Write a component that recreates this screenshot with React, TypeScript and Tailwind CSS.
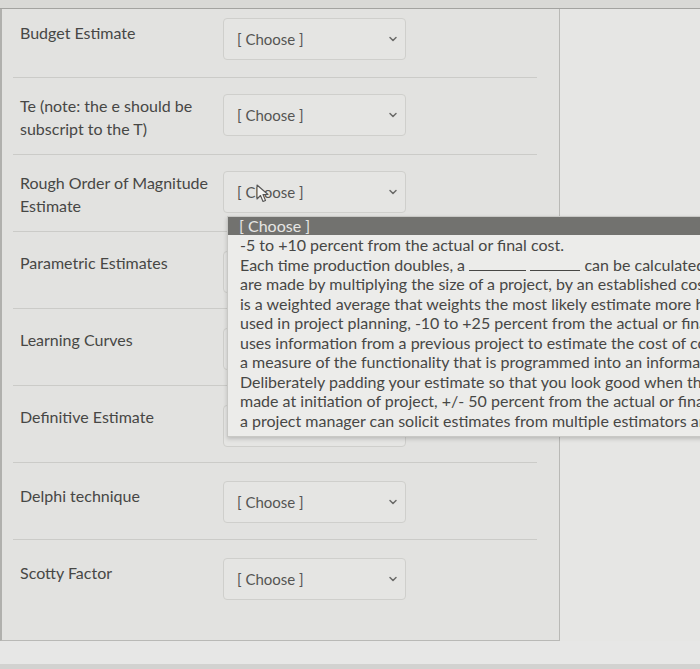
import { ChevronDown } from 'lucide-react';

const rows = [
  { label: ['Budget Estimate'], h: 'h-[69px]', pt: 'pt-[9px]', lt: 'mt-[3px]' },
  { label: ['Te (note: the e should be', 'subscript to the T)'], h: 'h-[77px]', pt: 'pt-[16px]', lt: '' },
  { label: ['Rough Order of Magnitude', 'Estimate'], h: 'h-[77px]', pt: 'pt-[16px]', lt: '', cursor: true },
  { label: ['Parametric Estimates'], h: 'h-[77px]', pt: 'pt-[19px]', lt: '' },
  { label: ['Learning Curves'], h: 'h-[77px]', pt: 'pt-[19px]', lt: '' },
  { label: ['Definitive Estimate'], h: 'h-[77px]', pt: 'pt-[19px]', lt: '' },
  { label: ['Delphi technique'], h: 'h-[77px]', pt: 'pt-[18px]', lt: 'mt-[3px]' },
  { label: ['Scotty Factor'], h: 'flex-1', pt: 'pt-[18px]', lt: 'mt-[3px]', last: true },
];

const options = [
  '-5 to +10 percent from the actual or final cost.',
  'blank',
  'are made by multiplying the size of a project, by an established cost per unit',
  'is a weighted average that weights the most likely estimate more heavily',
  'used in project planning, -10 to +25 percent from the actual or final cost.',
  'uses information from a previous project to estimate the cost of comparable project',
  'a measure of the functionality that is programmed into an information system',
  'Deliberately padding your estimate so that you look good when the project ends',
  'made at initiation of project, +/- 50 percent from the actual or final cost.',
  'a project manager can solicit estimates from multiple estimators and combine',
];

const Select = ({ cursor }: { cursor?: boolean }) => (
  <div className="relative w-[183px] h-[42px] rounded-[4px] border border-[#cfcfcc] bg-[#e5e5e3] flex items-center justify-between pl-[13px] pr-[6px]">
    <span className="text-[15px] text-[#555553]">[ Choose ]</span>
    <ChevronDown size={12} strokeWidth={3} className="text-[#6a6a68]" />
    {cursor && (
      <svg className="absolute left-[32px] top-[12px]" width="14" height="20" viewBox="0 0 14 20">
        <path d="M1 1 L1 15 L4.5 11.5 L7 17.5 L9.5 16.5 L7 10.5 L12 10.5 Z" fill="#f4f4f2" stroke="#555" strokeWidth="1.1" strokeLinejoin="round" />
      </svg>
    )}
  </div>
);

export default function App() {
  return (
    <div
      className="relative w-[700px] h-[669px] overflow-hidden bg-[#e4e4e2] flex flex-col"
      style={{ fontFamily: 'Lato, "Open Sans", sans-serif' }}
    >
      {/* top strip */}
      <div className="h-[9px] shrink-0 bg-[#d9d9d6] border-b border-[#a3a3a0]" />

      <div className="flex">
        {/* question panel */}
        <div className="w-[560px] h-[632px] bg-[#e2e2e0] border-l-2 border-l-[#b0b0ad] border-r border-b border-[#b9b9b6] flex flex-col">
          <div className="ml-[11px] w-[524px] flex flex-col flex-1">
            {rows.map((r, i) => (
              <div
                key={i}
                className={`${r.h} ${r.pt} ${r.last ? '' : 'border-b border-[#cbcbc8]'} flex items-start`}
              >
                <div className={`w-[210px] pl-[7px] text-[16px] leading-[23px] text-[#474745] ${r.lt}`}>
                  {r.label.map((l) => (
                    <div key={l}>{l}</div>
                  ))}
                </div>
                <Select cursor={r.cursor} />
              </div>
            ))}
          </div>
        </div>
        {/* right empty area */}
        <div className="flex-1 h-[632px] bg-[#e6e6e4]" />
      </div>
      <div className="flex-1 bg-[#e7e7e6] border-b-[5px] border-[#d2d2d0]" />

      {/* open dropdown list */}
      <div className="absolute left-[227px] top-[216px] w-[520px] bg-[#ececea] border border-[#c8c8c5] shadow-[0_2px_4px_rgba(0,0,0,0.18)] pb-[6px]">
        <div className="h-[18px] bg-[#72726f] pl-[11px] text-[16px] leading-[18px] text-[#e6e6e4] whitespace-nowrap">
          [ Choose ]
        </div>
        {options.map((o, i) => (
          <div key={i} className="pl-[12px] text-[16px] leading-[19.5px] text-[#474745] whitespace-nowrap">
            {o === 'blank' ? (
              <>
                Each time production doubles, a{' '}
                <span className="inline-block w-[57px] border-b border-[#474745] align-baseline" />{' '}
                <span className="inline-block w-[50px] border-b border-[#474745] align-baseline" /> can be calculated
                to estimate the cost
              </>
            ) : (
              o
            )}
          </div>
        ))}
      </div>
    </div>
  );
}
